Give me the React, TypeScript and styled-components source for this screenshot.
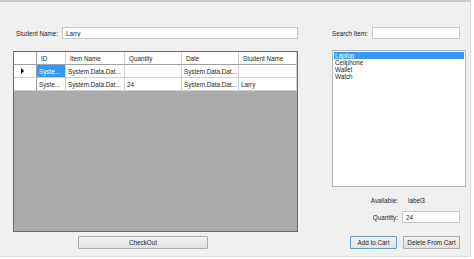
import React from 'react';
import styled, { createGlobalStyle } from 'styled-components';

const GlobalStyle = createGlobalStyle`
  html, body {
    margin: 0;
    padding: 0;
    background: #ffffff;
  }
  body {
    font-family: "Liberation Sans", Arial, sans-serif;
    font-size: 6.3px;
    color: #1e1e1e;
  }
`;

const columns = [
  { key: 'id', title: 'ID', width: 29 },
  { key: 'item', title: 'Item Name', width: 59 },
  { key: 'qty', title: 'Quantity', width: 57 },
  { key: 'date', title: 'Date', width: 57 },
  { key: 'student', title: 'Student Name', width: 58 },
];

const rows = [
  { id: 'Syste...', item: 'System.Data.Dat...', qty: '', date: 'System.Data.Dat...', student: '', current: true },
  { id: 'Syste...', item: 'System.Data.Dat...', qty: '24', date: 'System.Data.Dat...', student: 'Larry', current: false },
];

const items = ['Laptop', 'Cellphone', 'Wallet', 'Watch'];

const App = () => {
  return (
    <>
      <GlobalStyle />
      <Window>
        <LeftColumn>
          <FieldRow>
            <Label $width={49}>Student Name:</Label>
            <TextBox defaultValue="Larry" />
          </FieldRow>
          <Grid>
            <GridRow>
              <RowHeader $head />
              {columns.map(c => (
                <HeadCell key={c.key} $width={c.width}>
                  {c.title}
                </HeadCell>
              ))}
            </GridRow>
            {rows.map((r, i) => (
              <GridRow key={i}>
                <RowHeader>{r.current && <Arrow />}</RowHeader>
                {columns.map(c => (
                  <Cell
                    key={c.key}
                    $width={c.width}
                    $selected={r.current && c.key === 'id'}
                  >
                    {r[c.key as keyof typeof r]}
                  </Cell>
                ))}
              </GridRow>
            ))}
          </Grid>
          <CheckOutButton>CheckOut</CheckOutButton>
        </LeftColumn>

        <RightColumn>
          <FieldRow>
            <Label $width={40} $flush>Search Item:</Label>
            <SearchBox />
          </FieldRow>
          <ListBox>
            {items.map((it, i) => (
              <ListItem key={it} $selected={i === 0}>
                {it}
              </ListItem>
            ))}
          </ListBox>
          <InfoRow>
            <InfoLabel>Available:</InfoLabel>
            <InfoValue>label3</InfoValue>
          </InfoRow>
          <QuantityRow>
            <InfoLabel>Quantity:</InfoLabel>
            <QuantityBox defaultValue="24" />
          </QuantityRow>
          <ButtonRow>
            <Button $width={47} $default>
              Add to Cart
            </Button>
            <Button $width={57}>Delete From Cart</Button>
          </ButtonRow>
        </RightColumn>
      </Window>
    </>
  );
};

const Window = styled.div`
  display: flex;
  box-sizing: border-box;
  width: 471px;
  height: 257px;
  padding: 25px 0 0 13px;
  background: #f0f0f0;
  border-top: 2px solid #c9c9c9;
  border-right: 1px solid #dcdcdc;
  border-bottom: 1px solid #dcdcdc;
`;

const LeftColumn = styled.div`
  display: flex;
  flex-direction: column;
  width: 285px;
`;

const RightColumn = styled.div`
  display: flex;
  flex-direction: column;
  width: 134px;
  margin-left: 34px;
`;

const FieldRow = styled.div`
  display: flex;
  align-items: center;
  height: 12px;
`;

const Label = styled.span<{ $width: number; $flush?: boolean }>`
  flex: none;
  width: ${p => p.$width}px;
  padding-left: ${p => (p.$flush ? 0 : 3)}px;
  box-sizing: border-box;
  white-space: nowrap;
`;

const TextBox = styled.input`
  flex: 1;
  min-width: 0;
  box-sizing: border-box;
  height: 12px;
  margin: 0;
  padding: 0 3px;
  border: 1px solid #c8c8c8;
  background: #fff;
  font: inherit;
  color: #1e1e1e;
  outline: none;
`;

const SearchBox = styled(TextBox)`
  flex: none;
  width: 88px;
`;

const Grid = styled.div`
  display: flex;
  flex-direction: column;
  box-sizing: border-box;
  height: 181px;
  margin-top: 12px;
  background: #ababab;
  border: 1px solid #6a6a6a;
  overflow: hidden;
`;

const GridRow = styled.div`
  display: flex;
  height: 13px;
`;

const RowHeader = styled.div<{ $head?: boolean }>`
  display: flex;
  align-items: center;
  justify-content: center;
  flex: none;
  box-sizing: border-box;
  width: 23px;
  background: #fff;
  border-right: 1px solid #a0a0a0;
  border-bottom: 1px solid ${p => (p.$head ? '#a0a0a0' : '#d0d0d0')};
`;

const Arrow = styled.span`
  width: 0;
  height: 0;
  margin-right: 6px;
  border-top: 3px solid transparent;
  border-bottom: 3px solid transparent;
  border-left: 3px solid #000;
`;

const HeadCell = styled.div<{ $width: number }>`
  display: flex;
  align-items: center;
  flex: none;
  box-sizing: border-box;
  width: ${p => p.$width}px;
  padding-left: 4px;
  background: #fff;
  border-right: 1px solid #d0d0d0;
  border-bottom: 1px solid #a0a0a0;
  white-space: nowrap;
  overflow: hidden;
`;

const Cell = styled.div<{ $width: number; $selected?: boolean }>`
  display: flex;
  align-items: center;
  flex: none;
  box-sizing: border-box;
  width: ${p => p.$width}px;
  padding-left: 2px;
  background: ${p => (p.$selected ? '#3399ff' : '#fff')};
  color: ${p => (p.$selected ? '#fff' : '#1e1e1e')};
  border-right: 1px solid #d0d0d0;
  border-bottom: 1px solid #d0d0d0;
  white-space: nowrap;
  overflow: hidden;
`;

const Button = styled.button<{ $width: number; $default?: boolean }>`
  box-sizing: border-box;
  width: ${p => p.$width}px;
  height: 13px;
  margin: 0;
  padding: 0;
  font: inherit;
  color: #1e1e1e;
  background: linear-gradient(#f2f2f2, #e2e2e2);
  border: 1px solid ${p => (p.$default ? '#5d9bd2' : '#acacac')};
  border-radius: 1px;
  white-space: nowrap;
`;

const CheckOutButton = styled(Button).attrs({ $width: 130 })`
  margin: 4px 0 0 65px;
`;

const ListBox = styled.div`
  box-sizing: border-box;
  height: 137px;
  margin-top: 11px;
  padding: 1px;
  background: #fff;
  border: 1px solid #b4b4b4;
`;

const ListItem = styled.div<{ $selected?: boolean }>`
  height: 7px;
  line-height: 7px;
  padding-left: 1px;
  background: ${p => (p.$selected ? '#3399ff' : 'transparent')};
  color: ${p => (p.$selected ? '#fff' : '#1e1e1e')};
`;

const InfoRow = styled.div`
  display: flex;
  align-items: center;
  height: 10px;
  margin-top: 8px;
`;

const InfoLabel = styled.span`
  flex: none;
  box-sizing: border-box;
  width: 70px;
  padding-right: 4px;
  text-align: right;
`;

const InfoValue = styled.span`
  padding-left: 6px;
`;

const QuantityRow = styled.div`
  display: flex;
  align-items: center;
  height: 12px;
  margin-top: 6px;
`;

const QuantityBox = styled(TextBox)`
  flex: none;
  width: 58px;
`;

const ButtonRow = styled.div`
  display: flex;
  gap: 6px;
  margin: 13px 0 0 18px;
`;

export default App;
